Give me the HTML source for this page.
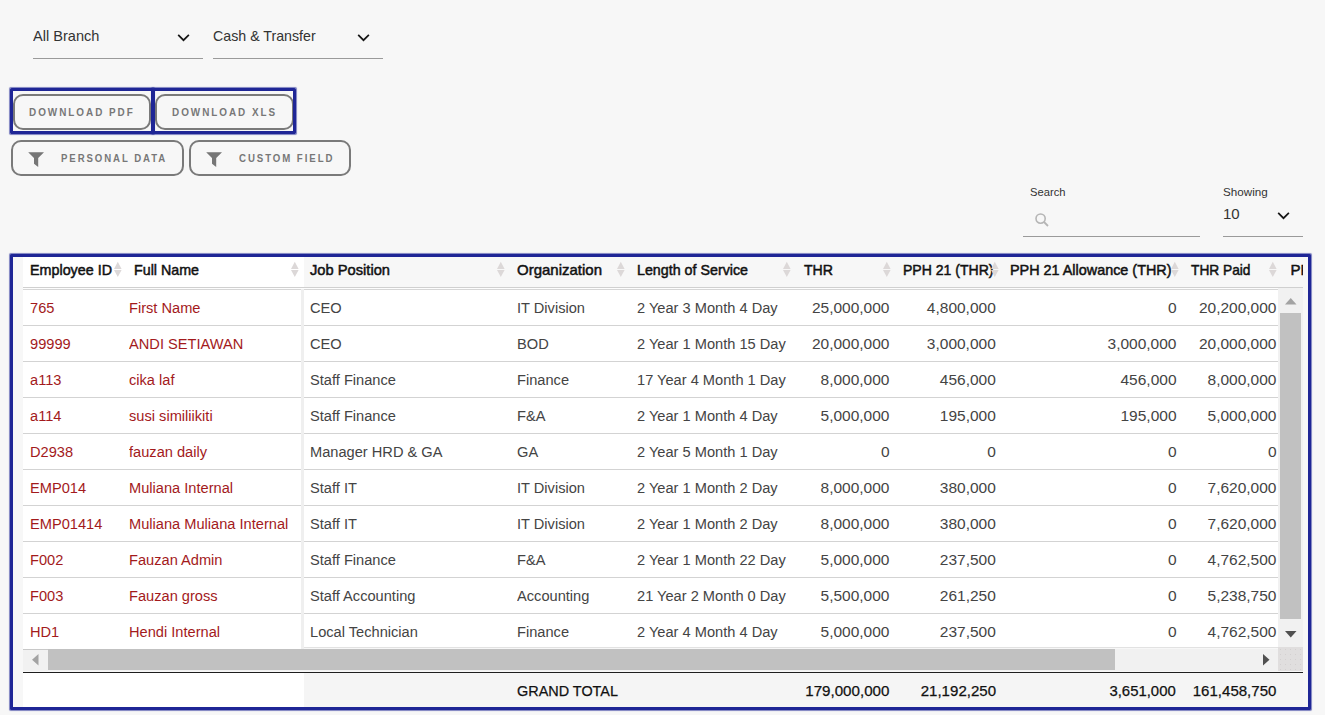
<!DOCTYPE html>
<html><head><meta charset="utf-8"><title>THR Report</title>
<style>
html,body{margin:0;padding:0;}
body{width:1325px;height:715px;overflow:hidden;background:#f7f7f7;position:relative;font-family:"Liberation Sans",sans-serif;}
.a{position:absolute;box-sizing:border-box;}
.t{position:absolute;white-space:pre;font-family:"Liberation Sans",sans-serif;}
.ln{position:absolute;height:1px;background:#d3d3d3;}
svg{position:absolute;overflow:visible;}
</style></head><body>
<!-- dropdowns -->
<div class="a" style="left:33px;top:58px;width:170px;height:1px;background:#9a9a9a"></div>
<div class="a" style="left:213px;top:58px;width:170px;height:1px;background:#9a9a9a"></div>
<svg style="left:177px;top:33px" width="13" height="9"><polyline points="1.2,1.8 6.5,7.2 11.9,1.8" fill="none" stroke="#151515" stroke-width="1.7"/></svg>
<svg style="left:357px;top:33px" width="13" height="9"><polyline points="1.2,1.8 6.5,7.2 11.9,1.8" fill="none" stroke="#151515" stroke-width="1.7"/></svg>

<!-- buttons -->
<div class="a" style="left:13px;top:94px;width:138px;height:36px;border:2px solid #7a7a7a;border-radius:10px"></div>
<div class="a" style="left:155px;top:94px;width:139px;height:36px;border:2px solid #7a7a7a;border-radius:10px"></div>
<div class="a" style="left:10px;top:88px;width:144px;height:46px;border:3px solid #1f2696;border-radius:1.5px;box-shadow:0 0 0.8px 0.3px rgba(31,38,150,0.55)"></div>
<div class="a" style="left:152px;top:88px;width:144px;height:46px;border:3px solid #1f2696;border-radius:1.5px;box-shadow:0 0 0.8px 0.3px rgba(31,38,150,0.55)"></div>
<div class="a" style="left:11px;top:140px;width:173px;height:36px;border:2px solid #7a7a7a;border-radius:10px"></div>
<div class="a" style="left:189px;top:140px;width:162px;height:36px;border:2px solid #7a7a7a;border-radius:10px"></div>
<svg style="left:28px;top:152px" width="17" height="16"><path d="M0.2,0.2 H16 L10.2,6 V15 L6,11.8 V6 Z" fill="#767676"/></svg>
<svg style="left:206px;top:152px" width="17" height="16"><path d="M0.2,0.2 H16 L10.2,6 V15 L6,11.8 V6 Z" fill="#767676"/></svg>

<!-- search / showing -->
<svg style="left:1035.3px;top:212.5px" width="15" height="14"><circle cx="5.6" cy="5.6" r="4.6" fill="none" stroke="#b5b5b5" stroke-width="1.6"/><line x1="9" y1="9" x2="13" y2="13" stroke="#b5b5b5" stroke-width="1.8"/></svg>
<div class="a" style="left:1023px;top:236px;width:177px;height:1px;background:#9a9a9a"></div>
<div class="a" style="left:1223px;top:236px;width:80px;height:1px;background:#9a9a9a"></div>
<svg style="left:1277px;top:211px" width="13" height="9"><polyline points="1.2,1.8 6.5,7.2 11.9,1.8" fill="none" stroke="#151515" stroke-width="1.7"/></svg>

<!-- table frame -->
<div class="a" style="left:10px;top:254px;width:1301px;height:456px;border:3px solid #1f2696;border-radius:1.5px;background:#f7f7f7;box-shadow:0 0 0.8px 0.3px rgba(31,38,150,0.55)"></div>
<!-- header -->
<div class="a" style="left:23px;top:257px;width:281px;height:30px;background:#fff"></div>
<div class="a" style="left:304px;top:257px;width:999px;height:30px;background:#f7f7f7"></div>
<div class="a" style="left:23px;top:287px;width:1280px;height:1px;background:#d0d0d0"></div>
<div class="a" style="left:23px;top:288px;width:1255px;height:1px;background:#fdfdfd"></div>
<div class="a" style="left:23px;top:289px;width:1255px;height:1px;background:#d6d6d6"></div>
<!-- body -->
<div class="a" style="left:23px;top:290px;width:278px;height:359px;background:#fff"></div>
<div class="a" style="left:301px;top:289px;width:3px;height:360px;background:#efefef"></div>
<div class="a" style="left:304px;top:290px;width:974px;height:357px;background:#fff"></div>
<!--ROWLINES-->
<div class="ln" style="left:23px;top:325px;width:278px"></div><div class="ln" style="left:304px;top:325px;width:974px"></div>
<div class="ln" style="left:23px;top:361px;width:278px"></div><div class="ln" style="left:304px;top:361px;width:974px"></div>
<div class="ln" style="left:23px;top:397px;width:278px"></div><div class="ln" style="left:304px;top:397px;width:974px"></div>
<div class="ln" style="left:23px;top:433px;width:278px"></div><div class="ln" style="left:304px;top:433px;width:974px"></div>
<div class="ln" style="left:23px;top:469px;width:278px"></div><div class="ln" style="left:304px;top:469px;width:974px"></div>
<div class="ln" style="left:23px;top:505px;width:278px"></div><div class="ln" style="left:304px;top:505px;width:974px"></div>
<div class="ln" style="left:23px;top:541px;width:278px"></div><div class="ln" style="left:304px;top:541px;width:974px"></div>
<div class="ln" style="left:23px;top:577px;width:278px"></div><div class="ln" style="left:304px;top:577px;width:974px"></div>
<div class="ln" style="left:23px;top:613px;width:278px"></div><div class="ln" style="left:304px;top:613px;width:974px"></div>
<div class="a" style="left:304px;top:647px;width:974px;height:1px;background:#e2e2e2"></div>
<!-- footer -->
<div class="a" style="left:23px;top:672px;width:1280px;height:1px;background:#1e1e1e"></div>
<div class="a" style="left:23px;top:673px;width:281px;height:34px;background:#fff"></div>
<div class="a" style="left:304px;top:673px;width:999px;height:34px;background:#f5f5f5"></div>

<div class='t' style='top:24.80px;line-height:21px;font-size:15px;font-weight:400;color:#333;left:33.00px;transform-origin:0 0;transform:scaleX(0.9711);'>All Branch</div>
<div class='t' style='top:24.80px;line-height:21px;font-size:15px;font-weight:400;color:#333;left:213.00px;transform-origin:0 0;transform:scaleX(0.9475);'>Cash &amp; Transfer</div>
<div class='t' style='top:105.53px;line-height:14px;font-size:10px;font-weight:700;color:#777;letter-spacing:2px;left:29.00px;transform-origin:0 0;transform:scaleX(0.9906);'>DOWNLOAD PDF</div>
<div class='t' style='top:105.53px;line-height:14px;font-size:10px;font-weight:700;color:#777;letter-spacing:2px;left:171.50px;transform-origin:0 0;transform:scaleX(0.9902);'>DOWNLOAD XLS</div>
<div class='t' style='top:151.53px;line-height:14px;font-size:10px;font-weight:700;color:#777;letter-spacing:2px;left:60.80px;transform-origin:0 0;transform:scaleX(0.9608);'>PERSONAL DATA</div>
<div class='t' style='top:151.53px;line-height:14px;font-size:10px;font-weight:700;color:#777;letter-spacing:2px;left:238.50px;transform-origin:0 0;transform:scaleX(0.9656);'>CUSTOM FIELD</div>
<div class='t' style='top:183.82px;line-height:16px;font-size:11.5px;font-weight:400;color:#333;left:1030.20px;transform-origin:0 0;transform:scaleX(0.9743);'>Search</div>
<div class='t' style='top:183.82px;line-height:16px;font-size:11.5px;font-weight:400;color:#333;left:1222.70px;transform-origin:0 0;transform:scaleX(1.0130);'>Showing</div>
<div class='t' style='top:202.53px;line-height:22px;font-size:15.5px;font-weight:400;color:#333;left:1223.20px;transform-origin:0 0;transform:scaleX(0.9681);'>10</div>
<div class='t' style='top:259.30px;line-height:21px;font-size:15px;font-weight:400;color:#111;-webkit-text-stroke:0.5px #111;left:30.00px;transform-origin:0 0;transform:scaleX(0.9549);'>Employee ID</div>
<div class='t' style='top:259.30px;line-height:21px;font-size:15px;font-weight:400;color:#111;-webkit-text-stroke:0.5px #111;left:134.00px;transform-origin:0 0;transform:scaleX(0.9509);'>Full Name</div>
<div class='t' style='top:259.30px;line-height:21px;font-size:15px;font-weight:400;color:#111;-webkit-text-stroke:0.5px #111;left:309.50px;transform-origin:0 0;transform:scaleX(0.9790);'>Job Position</div>
<div class='t' style='top:259.30px;line-height:21px;font-size:15px;font-weight:400;color:#111;-webkit-text-stroke:0.5px #111;left:517.00px;transform-origin:0 0;transform:scaleX(0.9993);'>Organization</div>
<div class='t' style='top:259.30px;line-height:21px;font-size:15px;font-weight:400;color:#111;-webkit-text-stroke:0.5px #111;left:637.00px;transform-origin:0 0;transform:scaleX(0.9507);'>Length of Service</div>
<div class='t' style='top:259.30px;line-height:21px;font-size:15px;font-weight:400;color:#111;-webkit-text-stroke:0.5px #111;left:803.50px;transform-origin:0 0;transform:scaleX(0.9407);'>THR</div>
<div class='t' style='top:259.30px;line-height:21px;font-size:15px;font-weight:400;color:#111;-webkit-text-stroke:0.5px #111;left:903.20px;transform-origin:0 0;transform:scaleX(0.9360);'>PPH 21 (THR)</div>
<div class='t' style='top:259.30px;line-height:21px;font-size:15px;font-weight:400;color:#111;-webkit-text-stroke:0.5px #111;left:1010.30px;transform-origin:0 0;transform:scaleX(0.9590);'>PPH 21 Allowance (THR)</div>
<div class='t' style='top:259.30px;line-height:21px;font-size:15px;font-weight:400;color:#111;-webkit-text-stroke:0.5px #111;left:1190.80px;transform-origin:0 0;transform:scaleX(0.9149);'>THR Paid</div>
<div class='a' style='left:1290.60px;top:259.30px;width:12.40px;height:21px;overflow:hidden'><div class='t' style='top:0px;line-height:21px;font-size:15px;font-weight:400;color:#111;-webkit-text-stroke:0.5px #111;left:0px;transform-origin:0 0;transform:scaleX(1.0000);'>PPH 21 Paid</div></div>
<div class='t' style='top:296.53px;line-height:22px;font-size:15.5px;font-weight:400;color:#a31a1c;left:30.00px;transform-origin:0 0;transform:scaleX(0.9435);'>765</div>
<div class='t' style='top:296.53px;line-height:22px;font-size:15.5px;font-weight:400;color:#a31a1c;left:129.00px;transform-origin:0 0;transform:scaleX(0.9435);'>First Name</div>
<div class='t' style='top:296.53px;line-height:22px;font-size:15.5px;font-weight:400;color:#444;left:310.00px;transform-origin:0 0;transform:scaleX(0.9435);'>CEO</div>
<div class='t' style='top:296.53px;line-height:22px;font-size:15.5px;font-weight:400;color:#444;left:517.00px;transform-origin:0 0;transform:scaleX(0.9435);'>IT Division</div>
<div class='t' style='top:296.53px;line-height:22px;font-size:15.5px;font-weight:400;color:#444;left:637.00px;transform-origin:0 0;transform:scaleX(0.9435);'>2 Year 3 Month 4 Day</div>
<div class='t' style='top:296.53px;line-height:22px;font-size:15.5px;font-weight:400;color:#444;left:811.92px;width:77.58px;transform-origin:100% 0;transform:scaleX(1.0000);'>25,000,000</div>
<div class='t' style='top:296.53px;line-height:22px;font-size:15.5px;font-weight:400;color:#444;left:926.83px;width:68.97px;transform-origin:100% 0;transform:scaleX(1.0000);'>4,800,000</div>
<div class='t' style='top:296.53px;line-height:22px;font-size:15.5px;font-weight:400;color:#444;left:1167.88px;width:8.62px;transform-origin:100% 0;transform:scaleX(1.0000);'>0</div>
<div class='t' style='top:296.53px;line-height:22px;font-size:15.5px;font-weight:400;color:#444;left:1198.92px;width:77.58px;transform-origin:100% 0;transform:scaleX(1.0000);'>20,200,000</div>
<div class='t' style='top:332.53px;line-height:22px;font-size:15.5px;font-weight:400;color:#a31a1c;left:30.00px;transform-origin:0 0;transform:scaleX(0.9435);'>99999</div>
<div class='t' style='top:332.53px;line-height:22px;font-size:15.5px;font-weight:400;color:#a31a1c;left:129.00px;transform-origin:0 0;transform:scaleX(0.9435);'>ANDI SETIAWAN</div>
<div class='t' style='top:332.53px;line-height:22px;font-size:15.5px;font-weight:400;color:#444;left:310.00px;transform-origin:0 0;transform:scaleX(0.9435);'>CEO</div>
<div class='t' style='top:332.53px;line-height:22px;font-size:15.5px;font-weight:400;color:#444;left:517.00px;transform-origin:0 0;transform:scaleX(0.9435);'>BOD</div>
<div class='t' style='top:332.53px;line-height:22px;font-size:15.5px;font-weight:400;color:#444;left:637.00px;transform-origin:0 0;transform:scaleX(0.9435);'>2 Year 1 Month 15 Day</div>
<div class='t' style='top:332.53px;line-height:22px;font-size:15.5px;font-weight:400;color:#444;left:811.92px;width:77.58px;transform-origin:100% 0;transform:scaleX(1.0000);'>20,000,000</div>
<div class='t' style='top:332.53px;line-height:22px;font-size:15.5px;font-weight:400;color:#444;left:926.83px;width:68.97px;transform-origin:100% 0;transform:scaleX(1.0000);'>3,000,000</div>
<div class='t' style='top:332.53px;line-height:22px;font-size:15.5px;font-weight:400;color:#444;left:1107.53px;width:68.97px;transform-origin:100% 0;transform:scaleX(1.0000);'>3,000,000</div>
<div class='t' style='top:332.53px;line-height:22px;font-size:15.5px;font-weight:400;color:#444;left:1198.92px;width:77.58px;transform-origin:100% 0;transform:scaleX(1.0000);'>20,000,000</div>
<div class='t' style='top:368.53px;line-height:22px;font-size:15.5px;font-weight:400;color:#a31a1c;left:30.00px;transform-origin:0 0;transform:scaleX(0.9435);'>a113</div>
<div class='t' style='top:368.53px;line-height:22px;font-size:15.5px;font-weight:400;color:#a31a1c;left:129.00px;transform-origin:0 0;transform:scaleX(0.9435);'>cika laf</div>
<div class='t' style='top:368.53px;line-height:22px;font-size:15.5px;font-weight:400;color:#444;left:310.00px;transform-origin:0 0;transform:scaleX(0.9435);'>Staff Finance</div>
<div class='t' style='top:368.53px;line-height:22px;font-size:15.5px;font-weight:400;color:#444;left:517.00px;transform-origin:0 0;transform:scaleX(0.9435);'>Finance</div>
<div class='t' style='top:368.53px;line-height:22px;font-size:15.5px;font-weight:400;color:#444;left:637.00px;transform-origin:0 0;transform:scaleX(0.9435);'>17 Year 4 Month 1 Day</div>
<div class='t' style='top:368.53px;line-height:22px;font-size:15.5px;font-weight:400;color:#444;left:820.53px;width:68.97px;transform-origin:100% 0;transform:scaleX(1.0000);'>8,000,000</div>
<div class='t' style='top:368.53px;line-height:22px;font-size:15.5px;font-weight:400;color:#444;left:939.77px;width:56.03px;transform-origin:100% 0;transform:scaleX(1.0000);'>456,000</div>
<div class='t' style='top:368.53px;line-height:22px;font-size:15.5px;font-weight:400;color:#444;left:1120.47px;width:56.03px;transform-origin:100% 0;transform:scaleX(1.0000);'>456,000</div>
<div class='t' style='top:368.53px;line-height:22px;font-size:15.5px;font-weight:400;color:#444;left:1207.53px;width:68.97px;transform-origin:100% 0;transform:scaleX(1.0000);'>8,000,000</div>
<div class='t' style='top:404.53px;line-height:22px;font-size:15.5px;font-weight:400;color:#a31a1c;left:30.00px;transform-origin:0 0;transform:scaleX(0.9435);'>a114</div>
<div class='t' style='top:404.53px;line-height:22px;font-size:15.5px;font-weight:400;color:#a31a1c;left:129.00px;transform-origin:0 0;transform:scaleX(0.9435);'>susi similiikiti</div>
<div class='t' style='top:404.53px;line-height:22px;font-size:15.5px;font-weight:400;color:#444;left:310.00px;transform-origin:0 0;transform:scaleX(0.9435);'>Staff Finance</div>
<div class='t' style='top:404.53px;line-height:22px;font-size:15.5px;font-weight:400;color:#444;left:517.00px;transform-origin:0 0;transform:scaleX(0.9435);'>F&amp;A</div>
<div class='t' style='top:404.53px;line-height:22px;font-size:15.5px;font-weight:400;color:#444;left:637.00px;transform-origin:0 0;transform:scaleX(0.9435);'>2 Year 1 Month 4 Day</div>
<div class='t' style='top:404.53px;line-height:22px;font-size:15.5px;font-weight:400;color:#444;left:820.53px;width:68.97px;transform-origin:100% 0;transform:scaleX(1.0000);'>5,000,000</div>
<div class='t' style='top:404.53px;line-height:22px;font-size:15.5px;font-weight:400;color:#444;left:939.77px;width:56.03px;transform-origin:100% 0;transform:scaleX(1.0000);'>195,000</div>
<div class='t' style='top:404.53px;line-height:22px;font-size:15.5px;font-weight:400;color:#444;left:1120.47px;width:56.03px;transform-origin:100% 0;transform:scaleX(1.0000);'>195,000</div>
<div class='t' style='top:404.53px;line-height:22px;font-size:15.5px;font-weight:400;color:#444;left:1207.53px;width:68.97px;transform-origin:100% 0;transform:scaleX(1.0000);'>5,000,000</div>
<div class='t' style='top:440.53px;line-height:22px;font-size:15.5px;font-weight:400;color:#a31a1c;left:30.00px;transform-origin:0 0;transform:scaleX(0.9435);'>D2938</div>
<div class='t' style='top:440.53px;line-height:22px;font-size:15.5px;font-weight:400;color:#a31a1c;left:129.00px;transform-origin:0 0;transform:scaleX(0.9435);'>fauzan daily</div>
<div class='t' style='top:440.53px;line-height:22px;font-size:15.5px;font-weight:400;color:#444;left:310.00px;transform-origin:0 0;transform:scaleX(0.9435);'>Manager HRD &amp; GA</div>
<div class='t' style='top:440.53px;line-height:22px;font-size:15.5px;font-weight:400;color:#444;left:517.00px;transform-origin:0 0;transform:scaleX(0.9435);'>GA</div>
<div class='t' style='top:440.53px;line-height:22px;font-size:15.5px;font-weight:400;color:#444;left:637.00px;transform-origin:0 0;transform:scaleX(0.9435);'>2 Year 5 Month 1 Day</div>
<div class='t' style='top:440.53px;line-height:22px;font-size:15.5px;font-weight:400;color:#444;left:880.88px;width:8.62px;transform-origin:100% 0;transform:scaleX(1.0000);'>0</div>
<div class='t' style='top:440.53px;line-height:22px;font-size:15.5px;font-weight:400;color:#444;left:987.17px;width:8.62px;transform-origin:100% 0;transform:scaleX(1.0000);'>0</div>
<div class='t' style='top:440.53px;line-height:22px;font-size:15.5px;font-weight:400;color:#444;left:1167.88px;width:8.62px;transform-origin:100% 0;transform:scaleX(1.0000);'>0</div>
<div class='t' style='top:440.53px;line-height:22px;font-size:15.5px;font-weight:400;color:#444;left:1267.88px;width:8.62px;transform-origin:100% 0;transform:scaleX(1.0000);'>0</div>
<div class='t' style='top:476.53px;line-height:22px;font-size:15.5px;font-weight:400;color:#a31a1c;left:30.00px;transform-origin:0 0;transform:scaleX(0.9435);'>EMP014</div>
<div class='t' style='top:476.53px;line-height:22px;font-size:15.5px;font-weight:400;color:#a31a1c;left:129.00px;transform-origin:0 0;transform:scaleX(0.9435);'>Muliana Internal</div>
<div class='t' style='top:476.53px;line-height:22px;font-size:15.5px;font-weight:400;color:#444;left:310.00px;transform-origin:0 0;transform:scaleX(0.9435);'>Staff IT</div>
<div class='t' style='top:476.53px;line-height:22px;font-size:15.5px;font-weight:400;color:#444;left:517.00px;transform-origin:0 0;transform:scaleX(0.9435);'>IT Division</div>
<div class='t' style='top:476.53px;line-height:22px;font-size:15.5px;font-weight:400;color:#444;left:637.00px;transform-origin:0 0;transform:scaleX(0.9435);'>2 Year 1 Month 2 Day</div>
<div class='t' style='top:476.53px;line-height:22px;font-size:15.5px;font-weight:400;color:#444;left:820.53px;width:68.97px;transform-origin:100% 0;transform:scaleX(1.0000);'>8,000,000</div>
<div class='t' style='top:476.53px;line-height:22px;font-size:15.5px;font-weight:400;color:#444;left:939.77px;width:56.03px;transform-origin:100% 0;transform:scaleX(1.0000);'>380,000</div>
<div class='t' style='top:476.53px;line-height:22px;font-size:15.5px;font-weight:400;color:#444;left:1167.88px;width:8.62px;transform-origin:100% 0;transform:scaleX(1.0000);'>0</div>
<div class='t' style='top:476.53px;line-height:22px;font-size:15.5px;font-weight:400;color:#444;left:1207.53px;width:68.97px;transform-origin:100% 0;transform:scaleX(1.0000);'>7,620,000</div>
<div class='t' style='top:512.53px;line-height:22px;font-size:15.5px;font-weight:400;color:#a31a1c;left:30.00px;transform-origin:0 0;transform:scaleX(0.9435);'>EMP01414</div>
<div class='t' style='top:512.53px;line-height:22px;font-size:15.5px;font-weight:400;color:#a31a1c;left:129.00px;transform-origin:0 0;transform:scaleX(0.9435);'>Muliana Muliana Internal</div>
<div class='t' style='top:512.53px;line-height:22px;font-size:15.5px;font-weight:400;color:#444;left:310.00px;transform-origin:0 0;transform:scaleX(0.9435);'>Staff IT</div>
<div class='t' style='top:512.53px;line-height:22px;font-size:15.5px;font-weight:400;color:#444;left:517.00px;transform-origin:0 0;transform:scaleX(0.9435);'>IT Division</div>
<div class='t' style='top:512.53px;line-height:22px;font-size:15.5px;font-weight:400;color:#444;left:637.00px;transform-origin:0 0;transform:scaleX(0.9435);'>2 Year 1 Month 2 Day</div>
<div class='t' style='top:512.53px;line-height:22px;font-size:15.5px;font-weight:400;color:#444;left:820.53px;width:68.97px;transform-origin:100% 0;transform:scaleX(1.0000);'>8,000,000</div>
<div class='t' style='top:512.53px;line-height:22px;font-size:15.5px;font-weight:400;color:#444;left:939.77px;width:56.03px;transform-origin:100% 0;transform:scaleX(1.0000);'>380,000</div>
<div class='t' style='top:512.53px;line-height:22px;font-size:15.5px;font-weight:400;color:#444;left:1167.88px;width:8.62px;transform-origin:100% 0;transform:scaleX(1.0000);'>0</div>
<div class='t' style='top:512.53px;line-height:22px;font-size:15.5px;font-weight:400;color:#444;left:1207.53px;width:68.97px;transform-origin:100% 0;transform:scaleX(1.0000);'>7,620,000</div>
<div class='t' style='top:548.53px;line-height:22px;font-size:15.5px;font-weight:400;color:#a31a1c;left:30.00px;transform-origin:0 0;transform:scaleX(0.9435);'>F002</div>
<div class='t' style='top:548.53px;line-height:22px;font-size:15.5px;font-weight:400;color:#a31a1c;left:129.00px;transform-origin:0 0;transform:scaleX(0.9435);'>Fauzan Admin</div>
<div class='t' style='top:548.53px;line-height:22px;font-size:15.5px;font-weight:400;color:#444;left:310.00px;transform-origin:0 0;transform:scaleX(0.9435);'>Staff Finance</div>
<div class='t' style='top:548.53px;line-height:22px;font-size:15.5px;font-weight:400;color:#444;left:517.00px;transform-origin:0 0;transform:scaleX(0.9435);'>F&amp;A</div>
<div class='t' style='top:548.53px;line-height:22px;font-size:15.5px;font-weight:400;color:#444;left:637.00px;transform-origin:0 0;transform:scaleX(0.9435);'>2 Year 1 Month 22 Day</div>
<div class='t' style='top:548.53px;line-height:22px;font-size:15.5px;font-weight:400;color:#444;left:820.53px;width:68.97px;transform-origin:100% 0;transform:scaleX(1.0000);'>5,000,000</div>
<div class='t' style='top:548.53px;line-height:22px;font-size:15.5px;font-weight:400;color:#444;left:939.77px;width:56.03px;transform-origin:100% 0;transform:scaleX(1.0000);'>237,500</div>
<div class='t' style='top:548.53px;line-height:22px;font-size:15.5px;font-weight:400;color:#444;left:1167.88px;width:8.62px;transform-origin:100% 0;transform:scaleX(1.0000);'>0</div>
<div class='t' style='top:548.53px;line-height:22px;font-size:15.5px;font-weight:400;color:#444;left:1207.53px;width:68.97px;transform-origin:100% 0;transform:scaleX(1.0000);'>4,762,500</div>
<div class='t' style='top:584.53px;line-height:22px;font-size:15.5px;font-weight:400;color:#a31a1c;left:30.00px;transform-origin:0 0;transform:scaleX(0.9435);'>F003</div>
<div class='t' style='top:584.53px;line-height:22px;font-size:15.5px;font-weight:400;color:#a31a1c;left:129.00px;transform-origin:0 0;transform:scaleX(0.9435);'>Fauzan gross</div>
<div class='t' style='top:584.53px;line-height:22px;font-size:15.5px;font-weight:400;color:#444;left:310.00px;transform-origin:0 0;transform:scaleX(0.9435);'>Staff Accounting</div>
<div class='t' style='top:584.53px;line-height:22px;font-size:15.5px;font-weight:400;color:#444;left:517.00px;transform-origin:0 0;transform:scaleX(0.9435);'>Accounting</div>
<div class='t' style='top:584.53px;line-height:22px;font-size:15.5px;font-weight:400;color:#444;left:637.00px;transform-origin:0 0;transform:scaleX(0.9435);'>21 Year 2 Month 0 Day</div>
<div class='t' style='top:584.53px;line-height:22px;font-size:15.5px;font-weight:400;color:#444;left:820.53px;width:68.97px;transform-origin:100% 0;transform:scaleX(1.0000);'>5,500,000</div>
<div class='t' style='top:584.53px;line-height:22px;font-size:15.5px;font-weight:400;color:#444;left:939.77px;width:56.03px;transform-origin:100% 0;transform:scaleX(1.0000);'>261,250</div>
<div class='t' style='top:584.53px;line-height:22px;font-size:15.5px;font-weight:400;color:#444;left:1167.88px;width:8.62px;transform-origin:100% 0;transform:scaleX(1.0000);'>0</div>
<div class='t' style='top:584.53px;line-height:22px;font-size:15.5px;font-weight:400;color:#444;left:1207.53px;width:68.97px;transform-origin:100% 0;transform:scaleX(1.0000);'>5,238,750</div>
<div class='t' style='top:620.53px;line-height:22px;font-size:15.5px;font-weight:400;color:#a31a1c;left:30.00px;transform-origin:0 0;transform:scaleX(0.9435);'>HD1</div>
<div class='t' style='top:620.53px;line-height:22px;font-size:15.5px;font-weight:400;color:#a31a1c;left:129.00px;transform-origin:0 0;transform:scaleX(0.9435);'>Hendi Internal</div>
<div class='t' style='top:620.53px;line-height:22px;font-size:15.5px;font-weight:400;color:#444;left:310.00px;transform-origin:0 0;transform:scaleX(0.9435);'>Local Technician</div>
<div class='t' style='top:620.53px;line-height:22px;font-size:15.5px;font-weight:400;color:#444;left:517.00px;transform-origin:0 0;transform:scaleX(0.9435);'>Finance</div>
<div class='t' style='top:620.53px;line-height:22px;font-size:15.5px;font-weight:400;color:#444;left:637.00px;transform-origin:0 0;transform:scaleX(0.9435);'>2 Year 4 Month 4 Day</div>
<div class='t' style='top:620.53px;line-height:22px;font-size:15.5px;font-weight:400;color:#444;left:820.53px;width:68.97px;transform-origin:100% 0;transform:scaleX(1.0000);'>5,000,000</div>
<div class='t' style='top:620.53px;line-height:22px;font-size:15.5px;font-weight:400;color:#444;left:939.77px;width:56.03px;transform-origin:100% 0;transform:scaleX(1.0000);'>237,500</div>
<div class='t' style='top:620.53px;line-height:22px;font-size:15.5px;font-weight:400;color:#444;left:1167.88px;width:8.62px;transform-origin:100% 0;transform:scaleX(1.0000);'>0</div>
<div class='t' style='top:620.53px;line-height:22px;font-size:15.5px;font-weight:400;color:#444;left:1207.53px;width:68.97px;transform-origin:100% 0;transform:scaleX(1.0000);'>4,762,500</div>
<div class='t' style='top:680.20px;line-height:21px;font-size:15px;font-weight:400;color:#111;-webkit-text-stroke:0.25px #111;left:517.00px;transform-origin:0 0;transform:scaleX(0.9616);'>GRAND TOTAL</div>
<div class='t' style='top:680.20px;line-height:21px;font-size:15px;font-weight:400;color:#111;-webkit-text-stroke:0.25px #111;left:805.58px;width:83.42px;transform-origin:100% 0;transform:scaleX(1.0093);'>179,000,000</div>
<div class='t' style='top:680.20px;line-height:21px;font-size:15px;font-weight:400;color:#111;-webkit-text-stroke:0.25px #111;left:920.92px;width:75.08px;transform-origin:100% 0;transform:scaleX(1.0043);'>21,192,250</div>
<div class='t' style='top:680.20px;line-height:21px;font-size:15px;font-weight:400;color:#111;-webkit-text-stroke:0.25px #111;left:1109.27px;width:66.73px;transform-origin:100% 0;transform:scaleX(0.9935);'>3,651,000</div>
<div class='t' style='top:680.20px;line-height:21px;font-size:15px;font-weight:400;color:#111;-webkit-text-stroke:0.25px #111;left:1192.58px;width:83.42px;transform-origin:100% 0;transform:scaleX(1.0033);'>161,458,750</div>

<!-- header sort icons -->
<svg style="left:113.8px;top:262px" width="8" height="16"><path d="M0,6.9 L3.8,-0.2 L7.6,6.9 Z M0,8.1 L7.6,8.1 L3.8,15.1 Z" fill="#dcd8d8"/></svg>
<svg style="left:290.5px;top:262px" width="8" height="16"><path d="M0,6.9 L3.8,-0.2 L7.6,6.9 Z M0,8.1 L7.6,8.1 L3.8,15.1 Z" fill="#dcd8d8"/></svg>
<svg style="left:496.7px;top:262px" width="8" height="16"><path d="M0,6.9 L3.8,-0.2 L7.6,6.9 Z M0,8.1 L7.6,8.1 L3.8,15.1 Z" fill="#dcd8d8"/></svg>
<svg style="left:616.5px;top:262px" width="8" height="16"><path d="M0,6.9 L3.8,-0.2 L7.6,6.9 Z M0,8.1 L7.6,8.1 L3.8,15.1 Z" fill="#dcd8d8"/></svg>
<svg style="left:782.5px;top:262px" width="8" height="16"><path d="M0,6.9 L3.8,-0.2 L7.6,6.9 Z M0,8.1 L7.6,8.1 L3.8,15.1 Z" fill="#dcd8d8"/></svg>
<svg style="left:882.5px;top:262px" width="8" height="16"><path d="M0,6.9 L3.8,-0.2 L7.6,6.9 Z M0,8.1 L7.6,8.1 L3.8,15.1 Z" fill="#dcd8d8"/></svg>
<svg style="left:991.2px;top:262px" width="8" height="16"><path d="M0,6.9 L3.8,-0.2 L7.6,6.9 Z M0,8.1 L7.6,8.1 L3.8,15.1 Z" fill="#dcd8d8"/></svg>
<svg style="left:1170.7px;top:262px" width="8" height="16"><path d="M0,6.9 L3.8,-0.2 L7.6,6.9 Z M0,8.1 L7.6,8.1 L3.8,15.1 Z" fill="#dcd8d8"/></svg>
<svg style="left:1269.4px;top:262px" width="8" height="16"><path d="M0,6.9 L3.8,-0.2 L7.6,6.9 Z M0,8.1 L7.6,8.1 L3.8,15.1 Z" fill="#dcd8d8"/></svg>
<!-- clip cover for last header -->


<!-- vertical scrollbar -->
<div class="a" style="left:1278px;top:288px;width:25px;height:359px;background:#f1f1f1"></div>
<div class="a" style="left:1280px;top:313px;width:21px;height:306px;background:#c1c1c1"></div>
<svg style="left:1285px;top:298px" width="12" height="7"><path d="M0,6.5 L5.75,0 L11.5,6.5 Z" fill="#a3a3a3"/></svg>
<svg style="left:1285px;top:631px" width="12" height="7"><path d="M0,0 L11.5,0 L5.75,6.5 Z" fill="#505050"/></svg>
<!-- horizontal scrollbar -->
<div class="a" style="left:23px;top:649px;width:1255px;height:22px;background:#f1f1f1"></div>
<div class="a" style="left:23px;top:649px;width:25px;height:1px;background:#c8c8c8"></div>
<div class="a" style="left:48px;top:649px;width:1067px;height:21px;background:#c1c1c1"></div>
<svg style="left:32px;top:654px" width="7" height="12"><path d="M6.5,0 L6.5,11.5 L0,5.75 Z" fill="#a3a3a3"/></svg>
<svg style="left:1263px;top:654px" width="7" height="12"><path d="M0,0 L0,11.5 L6.5,5.75 Z" fill="#505050"/></svg>
<div class="a" style="left:1278px;top:647px;width:25px;height:24px;background-color:#e0dede;background-image:radial-gradient(#d3d0d0 0.5px, transparent 0.8px);background-size:5px 5px"></div>
</body></html>
